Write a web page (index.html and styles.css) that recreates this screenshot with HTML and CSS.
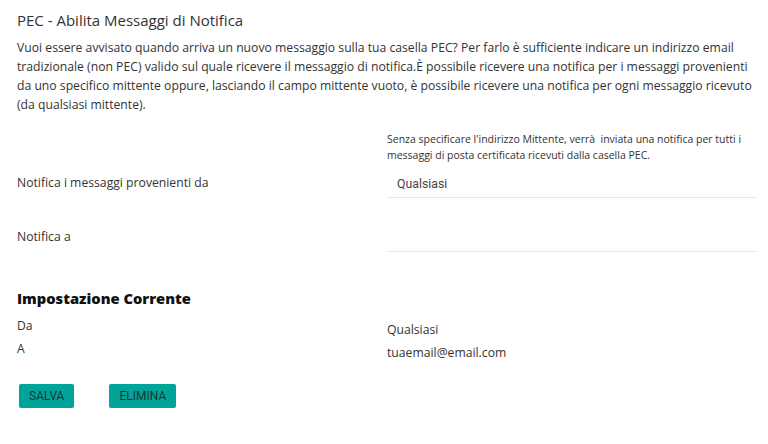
FILE: index.html
```html
<!DOCTYPE html>
<html lang="it">
<head>
<meta charset="utf-8">
<title>PEC - Abilita Messaggi di Notifica</title>
<link rel="stylesheet" href="styles.css">
</head>
<body>
<div class="page">
  <h1 class="title">PEC - Abilita Messaggi di Notifica</h1>
  <p class="intro">Vuoi essere avvisato quando arriva un nuovo messaggio sulla tua casella PEC? Per farlo è sufficiente indicare un indirizzo email tradizionale (non PEC) valido sul quale ricevere il messaggio di notifica.È possibile ricevere una notifica per i messaggi provenienti da uno specifico mittente oppure, lasciando il campo mittente vuoto, è possibile ricevere una notifica per ogni messaggio ricevuto (da qualsiasi mittente).</p>

  <div class="form">
    <div class="field-row">
      <label class="field-label" for="from">Notifica i messaggi provenienti da</label>
      <div class="field-control">
        <p class="helper">Senza specificare l'indirizzo Mittente, verrà&nbsp; inviata una notifica per tutti i messaggi di posta certificata ricevuti dalla casella PEC.</p>
        <input class="input" id="from" type="text" placeholder="Qualsiasi">
      </div>
    </div>
    <div class="field-row">
      <label class="field-label" for="to">Notifica a</label>
      <div class="field-control">
        <input class="input" id="to" type="text">
      </div>
    </div>
  </div>

  <h2 class="subtitle">Impostazione Corrente</h2>
  <div class="current">
    <div class="current-col">
      <div>Da</div>
      <div>A</div>
    </div>
    <div class="current-col values">
      <div>Qualsiasi</div>
      <div>tuaemail@email.com</div>
    </div>
  </div>

  <div class="actions">
    <button class="btn" type="button">Salva</button>
    <button class="btn" type="button">Elimina</button>
  </div>
</div>
</body>
</html>
```
FILE: styles.css
```css
* { box-sizing: border-box; }

html, body {
  margin: 0;
  background: #ffffff;
}

body {
  font-family: "Open Sans", "Liberation Sans", sans-serif;
  color: #333333;
}

.page {
  padding: 9px 11px 0 17px;
}

.title {
  margin: 0;
  font-size: 15px;
  font-weight: 400;
  line-height: 22px;
  color: #333333;
}

.intro {
  margin: 7px 0 0;
  font-size: 12.2px;
  line-height: 19px;
}

.form {
  margin-top: 17px;
  display: flex;
  flex-direction: column;
  gap: 27px;
}

.field-row {
  display: grid;
  grid-template-columns: 1fr 1fr;
  align-items: end;
}

.field-label {
  font-size: 12.2px;
  line-height: 27px;
  height: 27px;
  transform: translateY(-2px);
}

.helper {
  margin: 0 0 8px;
  font-size: 10.5px;
  line-height: 16px;
  padding-right: 12px;
}

.input {
  display: block;
  width: 100%;
  height: 27px;
  padding: 0 10px;
  border: 0;
  border-bottom: 1px solid #e6e6e6;
  outline: none;
  font-family: Roboto, "Liberation Sans", sans-serif;
  font-size: 12.3px;
  color: #333333;
  background: transparent;
}

.input::placeholder {
  color: #444444;
  opacity: 1;
}

.subtitle {
  margin: 36px 0 0;
  font-size: 14.7px;
  font-weight: 800;
  line-height: 20px;
  color: #111111;
}

.current {
  margin-top: 6px;
  display: grid;
  grid-template-columns: 1fr 1fr;
  font-size: 12.2px;
  line-height: 23px;
}

.values {
  padding-top: 4px;
}

.actions {
  margin-top: 20px;
  padding-left: 2px;
  display: flex;
  gap: 35px;
}

.btn {
  height: 24px;
  padding: 0 10px;
  border: 0;
  border-radius: 2px;
  background: #00a499;
  color: #1f3333;
  font-family: Roboto, "Liberation Sans", sans-serif;
  font-size: 12px;
  text-transform: uppercase;
  cursor: pointer;
}
```
